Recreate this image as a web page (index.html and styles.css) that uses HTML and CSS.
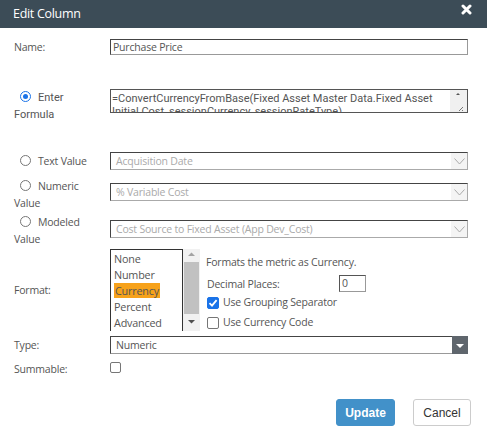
FILE: index.html
```html
<!DOCTYPE html>
<html>
<head>
<meta charset="utf-8">
<link rel="stylesheet" href="styles.css">
</head>
<body>
<div class="dialog">
  <div class="header">
    <span class="title">Edit Column</span>
    <svg class="close" width="11" height="11" viewBox="0 0 11 11"><path d="M2 2 L9 9 M9 2 L2 9" stroke="#fff" stroke-width="3" stroke-linecap="round"/></svg>
  </div>
  <div class="content">
    <div class="row r-name">
      <div class="label">Name:</div>
      <div class="input text-input">Purchase Price</div>
    </div>

    <div class="row r-formula">
      <div class="label roboto two"><span class="radio on"></span>Enter<br>Formula</div>
      <div class="textarea">
        <div class="ta-text">=ConvertCurrencyFromBase(Fixed Asset Master Data.Fixed Asset Initial Cost, sessionCurrency, sessionRateType)</div>
        <div class="ta-scroll">
          <svg width="16" height="23" viewBox="0 0 16 23"><path d="M6 5 L8 3 L10 5 Z" fill="#555"/><path d="M13 17 L9 21 M13 20 L12 21" stroke="#777" stroke-width="1"/></svg>
        </div>
      </div>
    </div>

    <div class="row r-text">
      <div class="label one"><span class="radio"></span>Text Value</div>
      <div class="select dis"><span>Acquisition Date</span><span class="chev"><svg width="11" height="7" viewBox="0 0 11 7"><path d="M0.5 0.5 L5.5 6 L10.5 0.5" fill="none" stroke="#aaa"/></svg></span></div>
    </div>

    <div class="row r-num">
      <div class="label two"><span class="radio"></span>Numeric<br>Value</div>
      <div class="select dis off5"><span>% Variable Cost</span><span class="chev"><svg width="11" height="7" viewBox="0 0 11 7"><path d="M0.5 0.5 L5.5 6 L10.5 0.5" fill="none" stroke="#aaa"/></svg></span></div>
    </div>

    <div class="row r-mod">
      <div class="label two"><span class="radio"></span>Modeled<br>Value</div>
      <div class="select dis off6"><span>Cost Source to Fixed Asset (App Dev_Cost)</span><span class="chev"><svg width="11" height="7" viewBox="0 0 11 7"><path d="M0.5 0.5 L5.5 6 L10.5 0.5" fill="none" stroke="#aaa"/></svg></span></div>
    </div>

    <div class="row r-format">
      <div class="label mid">Format:</div>
      <div class="format">
        <div class="listwrap">
          <div class="list">
            <div class="item">None</div>
            <div class="item">Number</div>
            <div class="item"><span class="sel">Currency</span></div>
            <div class="item">Percent</div>
            <div class="item">Advanced</div>
          </div>
          <div class="lscroll">
            <svg class="arr" width="17" height="10" viewBox="0 0 17 10"><path d="M5 7 L8.5 3.5 L12 7 Z" fill="#a3a3a3"/></svg>
            <div class="thumb"></div>
            <svg class="arr" width="17" height="10" viewBox="0 0 17 10"><path d="M5 3 L8.5 6.5 L12 3 Z" fill="#505050"/></svg>
          </div>
        </div>
        <div class="opts">
          <div class="desc">Formats the metric as Currency.</div>
          <div class="dec"><span>Decimal Places:</span><span class="decin">0</span></div>
          <div class="chk"><span class="cb on"><svg width="12" height="12" viewBox="0 0 12 12"><path d="M2.5 6.2 L5 8.7 L9.6 3.2" fill="none" stroke="#fff" stroke-width="1.8"/></svg></span>Use Grouping Separator</div>
          <div class="chk"><span class="cb"></span>Use Currency Code</div>
        </div>
      </div>
    </div>

    <div class="row r-type">
      <div class="label one">Type:</div>
      <div class="select typ"><span>Numeric</span><span class="darr"><svg width="16" height="17" viewBox="0 0 16 17"><path d="M4 7 L12 7 L8 11 Z" fill="#fff"/></svg></span></div>
    </div>

    <div class="row r-sum">
      <div class="label one">Summable:</div>
      <div><span class="cb plain"></span></div>
    </div>

    <div class="buttons">
      <button class="btn primary">Update</button>
      <button class="btn">Cancel</button>
    </div>
  </div>
</div>
</body>
</html>
```

FILE: styles.css
```css
* { box-sizing: border-box; }
html, body { margin: 0; padding: 0; background: #fff; }
body { font-family: "Open Sans", "Liberation Sans", sans-serif; font-size: 10.5px; letter-spacing: -0.2px; color: #555; width: 487px; height: 434px; overflow: hidden; }

.header { height: 28px; background: #3c4c57; display: flex; align-items: center; justify-content: space-between; padding: 0 15px 2px 13px; }
.title { color: #fff; font-size: 12.5px; letter-spacing: -0.3px; }
.close { margin-top: -8px; }

.content { padding: 0 19px 0 14px; }
.row { display: grid; grid-template-columns: 96px 1fr; align-items: start; }
.label { white-space: nowrap; }
.label.one { line-height: 18px; }
.label.two { line-height: 17px; }
.label.mid { align-self: center; }
.roboto { font-family: Roboto, "Liberation Sans", sans-serif; font-size: 11px; letter-spacing: 0; }

.radio { display: inline-block; width: 11px; height: 11px; border: 1px solid #767676; border-radius: 50%; margin: 0 7px 0 6px; vertical-align: -1px; position: relative; }
.radio.on { border: 1.5px solid #1a73e8; }
.radio.on::after { content: ""; position: absolute; left: 1.5px; top: 1.5px; width: 5px; height: 5px; border-radius: 50%; background: #1a73e8; }

.input, .textarea, .select { border: 1px solid #999; border-top-color: #444; border-left-color: #444; background: #fff; }

.r-name { margin-top: 11px; align-items: center; }
.text-input { height: 16px; line-height: 14px; padding-left: 2px; color: #555; }

.r-formula { margin-top: 34px; }
.textarea { height: 24px; display: flex; overflow: hidden; border-color: #555; }
.ta-text { flex: 1; font-family: Roboto, "Liberation Sans", sans-serif; font-size: 11px; letter-spacing: 0; line-height: 13px; color: #555; padding: 2px 0 0 1px; }
.ta-scroll { width: 17px; background: #f0f0f0; display: flex; }

.select { height: 18px; display: flex; align-items: center; justify-content: space-between; padding-left: 5px; color: #aaa; }
.select.dis { border-color: #aaa; border-top-color: #444; border-left-color: #444; }
.chev { width: 16px; height: 16px; background: #f4f4f4; display: flex; align-items: center; justify-content: center; }
.r-text { margin-top: 29px; }
.r-num { margin-top: 8px; }
.off5 { margin-top: 5px; }
.r-mod { margin-top: 2px; }
.off6 { margin-top: 6px; }

.r-format { margin-top: 1px; }
.format { display: flex; height: 82px; }
.listwrap { display: flex; height: 82px; }
.list { width: 73px; border: 1px solid #333; border-bottom: 0; padding-top: 1px; }
.item { line-height: 16px; padding-left: 3px; color: #555; font-size: 10.8px; }
.sel { background: #f7a21b; padding: 0 1px; display: inline-block; line-height: 15px; }
.lscroll { width: 17px; background: #f1f1f1; display: flex; flex-direction: column; justify-content: space-between; padding: 0 0 4px; }
.thumb { height: 46px; margin: 0 1px; background: #c1c1c1; flex: 1; margin-top: 3px; margin-bottom: 3px; }
.arr { display: block; }

.opts { padding-left: 6px; padding-top: 5px; }
.desc { line-height: 16px; }
.dec { display: flex; align-items: center; margin-top: 5px; padding-left: 1px; }
.dec span:first-child { width: 132px; }
.decin { width: 27px; height: 17px; border: 1px solid #555; border-right-color: #999; border-bottom-color: #999; padding-left: 2px; line-height: 15px; }
.chk { display: flex; align-items: center; margin-top: 2px; line-height: 17px; }
.chk + .chk { margin-top: 3px; }
.cb { display: inline-block; width: 12px; height: 12px; border: 1px solid #767676; border-radius: 2px; margin: 0 4px 0 1px; background: #fff; }
.cb.on { background: #1a73e8; border-color: #1a73e8; }
.cb.on svg { display: block; margin: -1px; }
.cb.plain { margin: 0; width: 11px; height: 11px; vertical-align: top; margin-top: 2px; }

.r-type { margin-top: 5px; }
.select.typ { color: #555; padding-right: 0; border-color: #999; border-top-color: #444; border-left-color: #444; }
.darr { width: 16px; height: 18px; margin-top: -1px; margin-bottom: -1px; margin-right: -1px; background: #5f666d; display: flex; align-items: center; justify-content: center; }

.r-sum { margin-top: 6px; }

.buttons { display: flex; justify-content: flex-end; gap: 18px; margin-top: 21px; margin-right: -3px; }
.btn { height: 27px; border-radius: 3px; font-family: "Liberation Sans", Arial, sans-serif; font-size: 12px; letter-spacing: 0; border: 1px solid #ccc; background: #fff; color: #333; padding: 0; width: 58px; }
.btn.primary { width: 59px; background: #4291c9; border-color: #4291c9; color: #fff; font-weight: bold; }
```
